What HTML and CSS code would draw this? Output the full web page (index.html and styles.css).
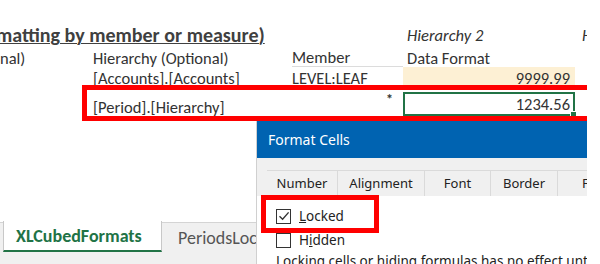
FILE: index.html
```html
<!DOCTYPE html>
<html lang="en">
<head>
    <meta charset="UTF-8">
    <title>XLCubedFormats</title>
    <link rel="stylesheet" href="styles.css">
</head>
<body>
    <div id="screen">
        <div class="sheet">
            <div class="cell top title"><span class="cut">matting by member or measure)</span></div>
            <div class="cell top"></div>
            <div class="cell top"></div>
            <div class="cell top italic">Hierarchy 2</div>
            <div class="cell top italic">H</div>

            <div class="cell">nal)</div>
            <div class="cell">Hierarchy (Optional)</div>
            <div class="cell underlined">Member</div>
            <div class="cell">Data Format</div>
            <div class="cell"></div>

            <div class="cell"></div>
            <div class="cell">[Accounts].[Accounts]</div>
            <div class="cell">LEVEL:LEAF</div>
            <div class="cell number yellow">9999.99</div>
            <div class="cell"></div>

            <div class="cell"></div>
            <div class="cell">[Period].[Hierarchy]</div>
            <div class="cell star">*</div>
            <div class="cell number selected">1234.56<span class="handle"></span></div>
            <div class="cell"></div>
        </div>

        <div class="tabbar">
            <div class="sheet-tab active">XLCubedFormats</div>
            <div class="sheet-tab">PeriodsLocked</div>
        </div>

        <div class="dialog">
            <div class="dialog-title">Format Cells</div>
            <div class="dialog-tabs">
                <div class="dtab">Number</div>
                <div class="dtab">Alignment</div>
                <div class="dtab">Font</div>
                <div class="dtab">Border</div>
                <div class="dtab">Fill</div>
            </div>
            <div class="dialog-body">
                <label class="check">
                    <span class="box">
                        <svg width="12" height="12" viewBox="0 0 12 12"><path d="M1.5 6.2 L4.6 9.2 L10.6 2.4" fill="none" stroke="#333" stroke-width="1.4"/></svg>
                    </span>
                    <span><u>L</u>ocked</span>
                </label>
                <label class="check">
                    <span class="box"></span>
                    <span>H<u>i</u>dden</span>
                </label>
                <p class="note">Locking cells or hiding formulas has no effect until you protect the worksheet.</p>
            </div>
        </div>

        <div class="mark mark-row"></div>
        <div class="mark mark-locked"></div>
    </div>
</body>
</html>
```

FILE: styles.css
```css
body {
    margin: 0;
    background: #fff;
}

#screen {
    position: relative;
    width: 587px;
    height: 264px;
    overflow: hidden;
    display: flex;
    flex-direction: column;
    font-family: Carlito, Lato, "Liberation Sans", sans-serif;
    color: #333;
}

.sheet {
    display: grid;
    grid-template-columns: 93px 199px 111px 172px 12px;
    grid-template-rows: 20px 20px 20px 29px;
    padding-top: 27px;
    font-size: 16.5px;
}

.cell {
    white-space: nowrap;
    line-height: 18px;
    display: flex;
    align-items: flex-end;
}

.cell.top {
    padding-bottom: 3px;
}

.cell:nth-child(5n+4) {
    padding-left: 4px;
}

.cell:nth-child(5n) {
    padding-left: 7px;
}

.title {
    font-size: 20px;
    font-weight: bold;
    text-decoration: underline;
    text-decoration-thickness: 1px;
    color: #404040;
}

.cut {
    margin-left: -4px;
}

.italic {
    font-style: italic;
}

.underlined {
    border-bottom: 1px solid #dcdcdc;
}

.number {
    justify-content: flex-end;
    padding-right: 5px;
}

.yellow {
    background: #fdf0d4;
}

.star {
    justify-content: flex-end;
    padding-right: 10px;
    padding-bottom: 7px;
    font-size: 14px;
    font-weight: bold;
}

.selected {
    position: relative;
    margin-top: 5px;
    border: 2px solid #217346;
    align-items: center;
    padding-right: 3px;
}

.handle {
    position: absolute;
    right: -4px;
    bottom: -4px;
    width: 5px;
    height: 5px;
    background: #217346;
    border: 1px solid #fff;
}

.tabbar {
    margin-top: auto;
    display: flex;
    align-items: flex-end;
    height: 42px;
    background: #f0f0f0;
    border-top: 1px solid #d4d4d4;
    box-sizing: border-box;
    padding-left: 3px;
    padding-bottom: 12px;
}

.sheet-tab {
    height: 29px;
    padding: 0 16px;
    font-size: 18px;
    line-height: 30px;
    color: #555;
    white-space: nowrap;
}

.sheet-tab.active {
    background: #fff;
    color: #217346;
    font-weight: bold;
    border-left: 1px solid #c8c8c8;
    border-right: 1px solid #c8c8c8;
    border-bottom: 2px solid #217346;
    padding: 0 0 0 12px;
    width: 145px;
}

.dialog {
    position: absolute;
    left: 256px;
    top: 121px;
    width: 331px;
    height: 160px;
    background: #fff;
    border-left: 1px solid #d0d0d0;
    font-family: "Noto Sans", "Open Sans", sans-serif;
    color: #222;
}

.dialog-title {
    height: 37px;
    background: #0063b1;
    color: #fff;
    font-size: 14px;
    line-height: 37px;
    padding-left: 11px;
}

.dialog-tabs {
    display: flex;
    background: #f0f0f0;
    padding: 12px 0 0 10px;
}

.dtab {
    height: 25px;
    line-height: 25px;
    font-size: 13px;
    text-align: center;
    border-top: 1px solid #dadada;
    border-right: 1px solid #dadada;
    flex: none;
}

.dtab:nth-child(1) { width: 70px; }
.dtab:nth-child(2) { width: 86px; }
.dtab:nth-child(3) { width: 65px; }
.dtab:nth-child(4) { width: 66px; }
.dtab:nth-child(5) { width: 60px; text-align: left; padding-left: 24px; }

.dialog-body {
    padding: 8px 0 0 19px;
    font-size: 13.5px;
}

.check {
    display: flex;
    align-items: center;
    gap: 8px;
    height: 24px;
}

.box {
    width: 13px;
    height: 13px;
    border: 1px solid #333;
    display: flex;
    align-items: center;
    justify-content: center;
}

.note {
    margin: 0;
    white-space: nowrap;
}

.mark {
    position: absolute;
    border: 5px solid #f00;
    box-sizing: border-box;
}

.mark-row {
    left: 82px;
    top: 85px;
    width: 516px;
    height: 36px;
}

.mark-locked {
    left: 261px;
    top: 195px;
    width: 118px;
    height: 38px;
}
```
